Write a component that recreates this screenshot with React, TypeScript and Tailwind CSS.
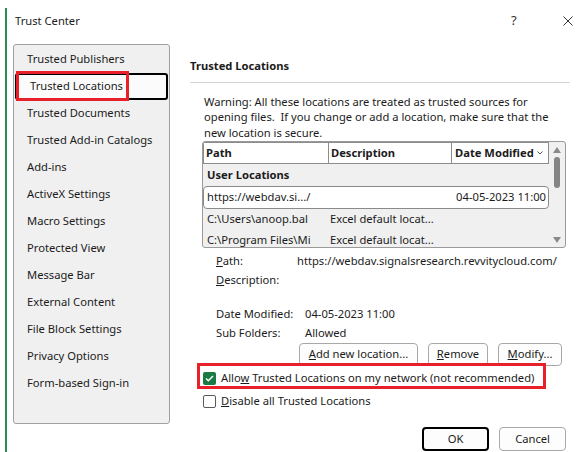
import React from "react";

const navItems = [
  "Trusted Publishers",
  "Trusted Locations",
  "Trusted Documents",
  "Trusted Add-in Catalogs",
  "Add-ins",
  "ActiveX Settings",
  "Macro Settings",
  "Protected View",
  "Message Bar",
  "External Content",
  "File Block Settings",
  "Privacy Options",
  "Form-based Sign-in",
];

function Btn({ children, className = "" }: { children: React.ReactNode; className?: string }) {
  return (
    <div
      className={`flex h-[23px] items-center justify-center rounded-[4px] border border-[#a8a8a8] bg-[#fdfdfd] text-[#1b1b1b] ${className}`}
    >
      {children}
    </div>
  );
}

function CheckBox({ checked }: { checked?: boolean }) {
  if (checked) {
    return (
      <div className="flex h-[13px] w-[13px] items-center justify-center rounded-[2px] bg-[#1a7a43]">
        <svg width="9" height="7" viewBox="0 0 9 7">
          <path d="M1 3.6 L3.3 5.8 L8 1" fill="none" stroke="white" strokeWidth="1.4" />
        </svg>
      </div>
    );
  }
  return <div className="h-[13px] w-[13px] rounded-[2px] border border-[#5a5a5a] bg-white" />;
}

export default function App() {
  return (
    <div
      className="relative h-[452px] w-[582px] overflow-hidden bg-white text-[11.2px] text-[#1b1b1b]"
      style={{ fontFamily: '"Noto Sans", "Open Sans", sans-serif' }}
    >
      {/* edge of the window behind */}
      <div className="absolute bottom-0 left-[5px] top-[8px] w-[2px] bg-[#2e8b57]" />

      {/* title bar */}
      <div className="flex h-[44px] items-center pb-[2px] pl-[15px]">
        <span>Trust Center</span>
        <span className="ml-auto w-[10px] text-[13px] text-[#333]">?</span>
        <svg className="ml-[42px] mr-[9px]" width="10" height="10" viewBox="0 0 10 10">
          <path d="M0.5 0.5 L9.5 9.5 M9.5 0.5 L0.5 9.5" stroke="#333" strokeWidth="1" />
        </svg>
      </div>

      <div className="flex pl-[13px]">
        {/* sidebar */}
        <div className="relative h-[380px] w-[157px] rounded-[3px] border border-[#a0a0a0] bg-[#f0f0f0] pt-[1px]">
          {navItems.map((item) => {
            const active = item === "Trusted Locations";
            return (
              <div
                key={item}
                className={`flex h-[27px] items-center pl-[13px] ${
                  active ? "mx-[1px] rounded-[3px] border-2 border-black bg-[#fbfbfb] pl-[11px]" : ""
                }`}
              >
                {item}
              </div>
            );
          })}
          <div className="absolute left-[2px] top-[26px] h-[30px] w-[113px] border-[3px] border-[#e8202a]" />
        </div>

        {/* main */}
        <div className="ml-[20px] w-[376px]">
          <div className="mt-[14px] font-bold">Trusted Locations</div>
          <div className="mt-[7px] h-px w-[380px] bg-[#d4d4d4]" />
          <div className="mt-[11px] pl-[14px] leading-[15.5px]">
            Warning: All these locations are treated as trusted sources for
            <br />
            opening files.&nbsp; If you change or add a location, make sure that the
            <br />
            new location is secure.
          </div>

          {/* table */}
          <div className="ml-[12px] mt-[1px] flex h-[107px] w-[364px] overflow-hidden rounded-[3px] border border-[#9a9a9a] bg-[#f0f0f0]">
            <div className="flex-1">
              <div className="flex h-[22px] bg-white font-bold">
                <div className="flex w-[126px] items-center border border-[#8c8c8c] pl-[2px]">Path</div>
                <div className="flex w-[123px] items-center border-y border-r border-[#8c8c8c] pl-[2px]">
                  Description
                </div>
                <div className="flex flex-1 items-center whitespace-nowrap border-y border-r border-[#8c8c8c] pl-[3px]">
                  Date Modified
                  <svg className="ml-[3px]" width="6" height="4" viewBox="0 0 6 4">
                    <path d="M0.5 0.5 L3 3 L5.5 0.5" fill="none" stroke="#444" strokeWidth="0.9" />
                  </svg>
                </div>
              </div>
              <div className="flex h-[22px] items-center pl-[4px] font-bold">User Locations</div>
              <div className="flex h-[23px] items-center rounded-[4px] border border-[#8a8a8a] bg-white pl-[3px] pr-[2px]">
                <span>https://webdav.si.../</span>
                <span className="ml-auto">04-05-2023 11:00</span>
              </div>
              <div className="flex h-[21px] items-center">
                <span className="w-[127px] pl-[4px]">C:\Users\anoop.bal</span>
                <span>Excel default locat...</span>
              </div>
              <div className="flex h-[21px] items-center">
                <span className="w-[127px] pl-[4px]">C:\Program Files\Mi</span>
                <span>Excel default locat...</span>
              </div>
            </div>
            {/* scrollbar */}
            <div className="flex w-[16px] flex-col items-center">
              <svg className="mt-[5px]" width="8" height="6" viewBox="0 0 8 6">
                <path d="M0 6 L4 0 L8 6 Z" fill="#8a8a8a" />
              </svg>
              <div className="mt-[4px] h-[31px] w-[6px] rounded-full bg-[#858585]" />
              <svg className="mb-[4px] mt-auto" width="8" height="6" viewBox="0 0 8 6">
                <path d="M0 0 L8 0 L4 6 Z" fill="#8a8a8a" />
              </svg>
            </div>
          </div>

          {/* details */}
          <div className="mt-[4px] pl-[26px]">
            <div className="flex h-[19px] items-center">
              <span className="w-[81px]">
                <u>P</u>ath:
              </span>
              <span>https://webdav.signalsresearch.revvitycloud.com/</span>
            </div>
            <div className="flex h-[19px] items-center">
              <span>
                <u>D</u>escription:
              </span>
            </div>
            <div className="mt-[15px] flex h-[19px] items-center">
              <span className="w-[89px]">Date Modified:</span>
              <span>04-05-2023 11:00</span>
            </div>
            <div className="flex h-[19px] items-center">
              <span className="w-[89px]">Sub Folders:</span>
              <span>Allowed</span>
            </div>
          </div>

          <div className="flex justify-end gap-[10px] pr-[4px]">
            <Btn className="w-[119px]">
              <span>
                <u>A</u>dd new location...
              </span>
            </Btn>
            <Btn className="w-[60px]">
              <span>
                <u>R</u>emove
              </span>
            </Btn>
            <Btn className="w-[64px]">
              <span>
                <u>M</u>odify...
              </span>
            </Btn>
          </div>

          <div className="relative ml-[13px] mt-[2px] flex h-[20px] items-center gap-[5px]">
            <CheckBox checked />
            <span>
              Allo<u>w</u> Trusted Locations on my network (not recommended)
            </span>
            <div className="absolute left-[-6px] top-[-5px] h-[26px] w-[349px] border-[3px] border-[#e8202a]" />
          </div>
          <div className="ml-[13px] mt-[3px] flex h-[20px] items-center gap-[5px]">
            <CheckBox />
            <span>
              <u>D</u>isable all Trusted Locations
            </span>
          </div>

          <div className="ml-[232px] mt-[16px] flex gap-[10px]">
            <div className="flex h-[24px] w-[73px] items-center justify-center rounded-[4px] border-2 border-black bg-[#fdfdfd]">
              OK
            </div>
            <div className="flex h-[24px] w-[73px] items-center justify-center rounded-[4px] border border-[#a8a8a8] bg-[#fdfdfd]">
              Cancel
            </div>
          </div>
        </div>
      </div>
    </div>
  );
}
